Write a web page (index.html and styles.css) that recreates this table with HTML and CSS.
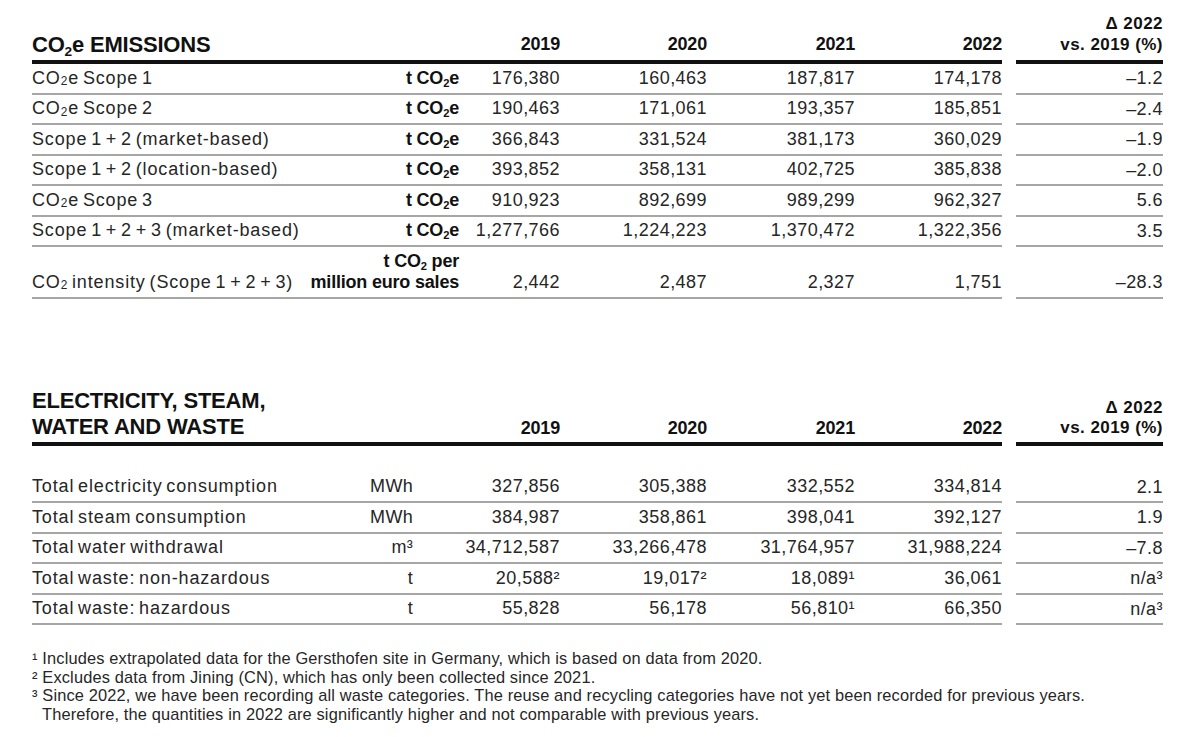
FILE: index.html
```html
<!DOCTYPE html>
<html lang="en">
<head>
<meta charset="utf-8">
<title>Emissions</title>
<link rel="stylesheet" href="styles.css">
</head>
<body>
<div class="page">
  <section class="tbl t1">
    <div class="row head">
      <div class="main">
        <div class="title span2">CO<span class="sb">2</span>e EMISSIONS</div>
        <div class="yr">2019</div>
        <div class="yr">2020</div>
        <div class="yr">2021</div>
        <div class="yr">2022</div>
      </div>
      <div class="delta dh"><span>Δ 2022</span><span>vs. 2019 (%)</span></div>
    </div>

    <div class="row data">
      <div class="main">
        <div class="lbl">CO<span class="sl">2</span>e Scope 1</div>
        <div class="unit">t CO<span class="sb">2</span>e</div>
        <div class="num">176,380</div>
        <div class="num">160,463</div>
        <div class="num">187,817</div>
        <div class="num">174,178</div>
      </div>
      <div class="delta">–1.2</div>
    </div>
    <div class="row data">
      <div class="main">
        <div class="lbl">CO<span class="sl">2</span>e Scope 2</div>
        <div class="unit">t CO<span class="sb">2</span>e</div>
        <div class="num">190,463</div>
        <div class="num">171,061</div>
        <div class="num">193,357</div>
        <div class="num">185,851</div>
      </div>
      <div class="delta">–2.4</div>
    </div>
    <div class="row data">
      <div class="main">
        <div class="lbl">Scope 1 + 2 (market-based)</div>
        <div class="unit">t CO<span class="sb">2</span>e</div>
        <div class="num">366,843</div>
        <div class="num">331,524</div>
        <div class="num">381,173</div>
        <div class="num">360,029</div>
      </div>
      <div class="delta">–1.9</div>
    </div>
    <div class="row data">
      <div class="main">
        <div class="lbl">Scope 1 + 2 (location-based)</div>
        <div class="unit">t CO<span class="sb">2</span>e</div>
        <div class="num">393,852</div>
        <div class="num">358,131</div>
        <div class="num">402,725</div>
        <div class="num">385,838</div>
      </div>
      <div class="delta">–2.0</div>
    </div>
    <div class="row data">
      <div class="main">
        <div class="lbl">CO<span class="sl">2</span>e Scope 3</div>
        <div class="unit">t CO<span class="sb">2</span>e</div>
        <div class="num">910,923</div>
        <div class="num">892,699</div>
        <div class="num">989,299</div>
        <div class="num">962,327</div>
      </div>
      <div class="delta">5.6</div>
    </div>
    <div class="row data">
      <div class="main">
        <div class="lbl">Scope 1 + 2 + 3 (market-based)</div>
        <div class="unit">t CO<span class="sb">2</span>e</div>
        <div class="num">1,277,766</div>
        <div class="num">1,224,223</div>
        <div class="num">1,370,472</div>
        <div class="num">1,322,356</div>
      </div>
      <div class="delta">3.5</div>
    </div>
    <div class="row data tall">
      <div class="main">
        <div class="lbl">CO<span class="sl">2</span> intensity (Scope 1 + 2 + 3)</div>
        <div class="unit">t CO<span class="sb">2</span> per<br>million euro sales</div>
        <div class="num">2,442</div>
        <div class="num">2,487</div>
        <div class="num">2,327</div>
        <div class="num">1,751</div>
      </div>
      <div class="delta">–28.3</div>
    </div>
  </section>

  <section class="tbl t2">
    <div class="row head">
      <div class="main">
        <div class="title title2 span2">ELECTRICITY, STEAM,<br>WATER AND WASTE</div>
        <div class="yr">2019</div>
        <div class="yr">2020</div>
        <div class="yr">2021</div>
        <div class="yr">2022</div>
      </div>
      <div class="delta dh"><span>Δ 2022</span><span>vs. 2019 (%)</span></div>
    </div>

    <div class="row data first">
      <div class="main">
        <div class="lbl">Total electricity consumption</div>
        <div class="unit reg">MWh</div>
        <div class="num">327,856</div>
        <div class="num">305,388</div>
        <div class="num">332,552</div>
        <div class="num">334,814</div>
      </div>
      <div class="delta">2.1</div>
    </div>
    <div class="row data">
      <div class="main">
        <div class="lbl">Total steam consumption</div>
        <div class="unit reg">MWh</div>
        <div class="num">384,987</div>
        <div class="num">358,861</div>
        <div class="num">398,041</div>
        <div class="num">392,127</div>
      </div>
      <div class="delta">1.9</div>
    </div>
    <div class="row data">
      <div class="main">
        <div class="lbl">Total water withdrawal</div>
        <div class="unit reg">m³</div>
        <div class="num">34,712,587</div>
        <div class="num">33,266,478</div>
        <div class="num">31,764,957</div>
        <div class="num">31,988,224</div>
      </div>
      <div class="delta">–7.8</div>
    </div>
    <div class="row data">
      <div class="main">
        <div class="lbl">Total waste: non-hazardous</div>
        <div class="unit reg">t</div>
        <div class="num">20,588²</div>
        <div class="num">19,017²</div>
        <div class="num">18,089¹</div>
        <div class="num">36,061</div>
      </div>
      <div class="delta">n/a³</div>
    </div>
    <div class="row data">
      <div class="main">
        <div class="lbl">Total waste: hazardous</div>
        <div class="unit reg">t</div>
        <div class="num">55,828</div>
        <div class="num">56,178</div>
        <div class="num">56,810¹</div>
        <div class="num">66,350</div>
      </div>
      <div class="delta">n/a³</div>
    </div>
  </section>

  <div class="notes">
    <p>¹ Includes extrapolated data for the Gersthofen site in Germany, which is based on data from 2020.</p>
    <p>² Excludes data from Jining (CN), which has only been collected since 2021.</p>
    <p>³ Since 2022, we have been recording all waste categories. The reuse and recycling categories have not yet been recorded for previous years.<br>Therefore, the quantities in 2022 are significantly higher and not comparable with previous years.</p>
  </div>
</div>
</body>
</html>
```

FILE: styles.css
```css
* { box-sizing: border-box; }
html, body { margin: 0; padding: 0; background: #fff; }
body {
  font-family: "Liberation Sans", Arial, sans-serif;
  color: #262626;
  font-size: 18px;
}
.page {
  width: 1200px;
  padding: 13px 0 0 32px;
}
.tbl { width: 1131px; }
.t2 { margin-top: 89px; }

.row { display: flex; gap: 14px; }
.main {
  display: grid;
  width: 970px;
  border-bottom: 2px solid #a6a6a6;
}
.t1 .main { grid-template-columns: 266px 161px 101px 147px 148px 147px; }
.t2 .main { grid-template-columns: 268px 113px 147px 147px 148px 147px; }
.delta {
  width: 147px;
  border-bottom: 2px solid #a6a6a6;
  text-align: right;
}
.span2 { grid-column: span 2; }

/* header */
.head .main, .head .delta {
  border-bottom: 4px solid #111;
  align-items: end;
  color: #111;
  font-weight: 700;
}
.title {
  font-size: 22px;
  line-height: 21px;
  padding-bottom: 5px;
  letter-spacing: -0.2px;
  white-space: nowrap;
}
.yr {
  text-align: right;
  line-height: 21px;
  padding-bottom: 5px;
  letter-spacing: -0.2px;
}
.dh {
  display: flex;
  flex-direction: column;
  justify-content: flex-end;
  align-items: flex-end;
  line-height: 21px;
  padding-bottom: 5px;
  letter-spacing: -0.3px;
  font-size: 17px;
}
.t2 .title2 { line-height: 26px; padding-bottom: 2px; }
.t2 .yr { line-height: 22px; padding-bottom: 3px; }
.t2 .dh { line-height: 20px; padding-bottom: 4px; }

/* data */
.data .main { height: 30.5px; align-items: center; }
.data .delta { height: 30.5px; line-height: 28.5px; }
.lbl { letter-spacing: 0.85px; word-spacing: -2px; white-space: nowrap; }
.num, .delta { letter-spacing: 0.45px; }
.num { text-align: right; }
.unit {
  text-align: right;
  font-weight: 700;
  color: #111;
  letter-spacing: -0.2px;
  line-height: 21px;
  white-space: nowrap;
}
.unit.reg { font-weight: 400; color: #262626; letter-spacing: 0.3px; }

.tall .main { height: 52px; align-items: end; padding-bottom: 4px; }
.tall .main > div { line-height: 21px; }
.tall .delta { height: 52px; line-height: 21px; padding-top: 25px; }

.t2 .first { margin-top: 26.5px; }

/* sub-scripts */
.sb { font-size: 0.62em; position: relative; top: 0.28em; line-height: 0; }
.sl { font-size: 0.66em; position: relative; top: 0.12em; line-height: 0; }

/* notes */
.notes {
  margin-top: 24px;
  font-size: 16.4px;
  line-height: 18.5px;
  color: #262626;
  letter-spacing: 0.15px;
}
.notes p {
  margin: 0;
  padding-left: 10px;
  text-indent: -10px;
  white-space: nowrap;
}
```
